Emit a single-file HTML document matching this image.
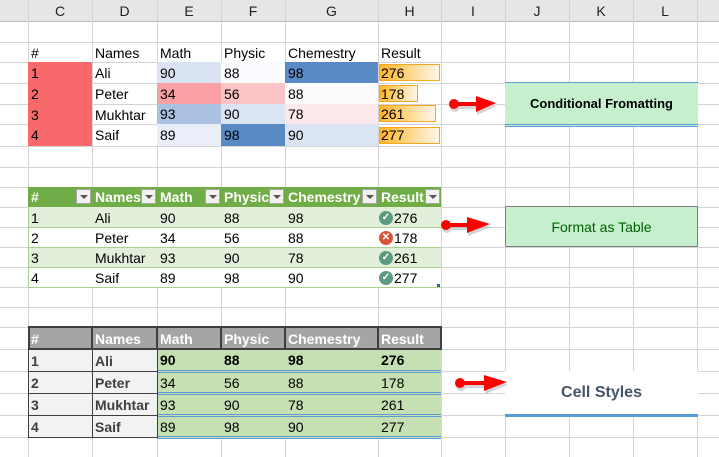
<!DOCTYPE html>
<html><head><meta charset="utf-8"><style>
body{margin:0;width:719px;height:457px;overflow:hidden;background:#fff;font-family:"Liberation Sans",sans-serif;font-size:14px;color:#000;position:relative}
.a{position:absolute;box-sizing:border-box}
.v{position:absolute;top:0;width:1px;height:457px;background:#d4d4d4}
.h{position:absolute;left:0;height:1px;width:719px;background:#d4d4d4}
.c{position:absolute;box-sizing:border-box;padding-left:3px;display:flex;align-items:center;white-space:nowrap}
.hd{position:absolute;top:0;height:22px;display:flex;align-items:center;justify-content:center;font-size:14px;color:#222}
.fb{position:absolute;width:15px;height:15px;background:#f2f2f2;border:1px solid #a6a6a6;box-sizing:border-box}
.fb:after{content:"";position:absolute;left:3px;top:5px;border-left:4px solid transparent;border-right:4px solid transparent;border-top:4px solid #555}
.ic{display:inline-block;width:14px;height:14px;border-radius:50%;color:#fff;font-size:10px;line-height:14px;text-align:center;margin-right:1px;font-weight:bold}
</style></head><body>
<div class="a" style="left:0;top:0;width:719px;height:22px;background:#e6e6e6;border-bottom:1px solid #bdbdbd"></div>
<div class="hd" style="left:28px;width:64px">C</div><div class="hd" style="left:92px;width:65px">D</div><div class="hd" style="left:157px;width:64px">E</div><div class="hd" style="left:221px;width:64px">F</div><div class="hd" style="left:285px;width:93px">G</div><div class="hd" style="left:378px;width:63px">H</div><div class="hd" style="left:441px;width:64px">I</div><div class="hd" style="left:505px;width:64px">J</div><div class="hd" style="left:569px;width:64px">K</div><div class="hd" style="left:633px;width:64px">L</div>
<div class="v" style="left:28px"></div><div class="v" style="left:92px"></div><div class="v" style="left:157px"></div><div class="v" style="left:221px"></div><div class="v" style="left:285px"></div><div class="v" style="left:378px"></div><div class="v" style="left:441px"></div><div class="v" style="left:505px"></div><div class="v" style="left:569px"></div><div class="v" style="left:633px"></div><div class="v" style="left:697px"></div>
<div class="h" style="top:42px"></div><div class="h" style="top:62px"></div><div class="h" style="top:83px"></div><div class="h" style="top:104px"></div><div class="h" style="top:124px"></div><div class="h" style="top:146px"></div><div class="h" style="top:167px"></div><div class="h" style="top:187px"></div><div class="h" style="top:207px"></div><div class="h" style="top:227px"></div><div class="h" style="top:247px"></div><div class="h" style="top:267px"></div><div class="h" style="top:287px"></div><div class="h" style="top:307px"></div><div class="h" style="top:327px"></div><div class="h" style="top:349px"></div><div class="h" style="top:371px"></div><div class="h" style="top:393px"></div><div class="h" style="top:415px"></div><div class="h" style="top:437px"></div>

<!-- Table 1 -->
<div class="c" style="left:28px;top:43px;height:20px">#</div><div class="c" style="left:92px;top:43px;height:20px">Names</div><div class="c" style="left:157px;top:43px;height:20px">Math</div><div class="c" style="left:221px;top:43px;height:20px">Physic</div><div class="c" style="left:285px;top:43px;height:20px">Chemestry</div><div class="c" style="left:378px;top:43px;height:20px">Result</div>
<div class="a" style="left:28px;top:62px;width:64px;height:84px;background:#f8696b"></div>
<div class="c" style="left:28px;top:62px;height:21px">1</div><div class="c" style="left:28px;top:83px;height:21px">2</div><div class="c" style="left:28px;top:104px;height:21px">3</div><div class="c" style="left:28px;top:124px;height:22px">4</div>
<div class="c" style="left:92px;top:62px;height:21px">Ali</div><div class="c" style="left:92px;top:83px;height:21px">Peter</div><div class="c" style="left:92px;top:104px;height:21px">Mukhtar</div><div class="c" style="left:92px;top:124px;height:22px">Saif</div>
<div class="c" style="left:157px;top:62px;width:64px;height:21px;background:#dae3f3">90</div><div class="c" style="left:157px;top:83px;width:64px;height:21px;background:#f9a0a2">34</div><div class="c" style="left:157px;top:104px;width:64px;height:20px;background:#aac1e2">93</div><div class="c" style="left:157px;top:124px;width:64px;height:22px;background:#e9eef8">89</div>
<div class="c" style="left:221px;top:62px;width:64px;height:21px;background:#fbfcff">88</div><div class="c" style="left:221px;top:83px;width:64px;height:21px;background:#fbc4c6">56</div><div class="c" style="left:221px;top:104px;width:64px;height:20px;background:#dbe4f3">90</div><div class="c" style="left:221px;top:124px;width:64px;height:22px;background:#5a8ac6">98</div>
<div class="c" style="left:285px;top:62px;width:93px;height:21px;background:#5a8ac6">98</div><div class="c" style="left:285px;top:83px;width:93px;height:21px;background:#fcfcff">88</div><div class="c" style="left:285px;top:104px;width:93px;height:20px;background:#fce9eb">78</div><div class="c" style="left:285px;top:124px;width:93px;height:22px;background:#dbe4f3">90</div>
<div class="a" style="left:379px;top:64px;width:61px;height:17px;border:1px solid #f5a623;background:linear-gradient(90deg,#ffb628,#fff3e0 95%)"></div>
<div class="a" style="left:379px;top:85px;width:39px;height:17px;border:1px solid #f5a623;background:linear-gradient(90deg,#ffb628,#fff3e0 95%)"></div>
<div class="a" style="left:379px;top:105px;width:57px;height:17px;border:1px solid #f5a623;background:linear-gradient(90deg,#ffb628,#fff3e0 95%)"></div>
<div class="a" style="left:379px;top:127px;width:61px;height:17px;border:1px solid #f5a623;background:linear-gradient(90deg,#ffb628,#fff3e0 95%)"></div>
<div class="c" style="left:378px;top:62px;height:21px">276</div><div class="c" style="left:378px;top:83px;height:21px">178</div><div class="c" style="left:378px;top:104px;height:20px">261</div><div class="c" style="left:378px;top:124px;height:22px">277</div>

<!-- Table 2 -->
<div class="a" style="left:28px;top:187px;width:413px;height:20px;background:#70ad47"></div>
<div class="a" style="left:28px;top:207px;width:413px;height:21px;background:#e2efda;border-bottom:1px solid #a9d08e;border-left:1px solid #a9d08e"></div>
<div class="a" style="left:28px;top:228px;width:413px;height:20px;background:#fff;border-bottom:1px solid #a9d08e;border-left:1px solid #a9d08e"></div>
<div class="a" style="left:28px;top:248px;width:413px;height:20px;background:#e2efda;border-bottom:1px solid #a9d08e;border-left:1px solid #a9d08e"></div>
<div class="a" style="left:28px;top:268px;width:413px;height:20px;background:#fff;border-bottom:1px solid #a9d08e;border-left:1px solid #a9d08e"></div>
<div style="color:#fff;font-weight:bold">
<div class="c" style="left:28px;top:187px;height:20px">#</div><div class="c" style="left:92px;top:187px;height:20px">Names</div><div class="c" style="left:157px;top:187px;height:20px">Math</div><div class="c" style="left:221px;top:187px;height:20px">Physic</div><div class="c" style="left:285px;top:187px;height:20px">Chemestry</div><div class="c" style="left:378px;top:187px;height:20px">Result</div></div>
<div class="fb" style="left:76px;top:189px"></div><div class="fb" style="left:141px;top:189px"></div><div class="fb" style="left:205px;top:189px"></div><div class="fb" style="left:269px;top:189px"></div><div class="fb" style="left:362px;top:189px"></div><div class="fb" style="left:425px;top:189px"></div>
<div class="c" style="left:28px;top:207px;height:21px">1</div><div class="c" style="left:92px;top:207px;height:21px">Ali</div><div class="c" style="left:157px;top:207px;height:21px">90</div><div class="c" style="left:221px;top:207px;height:21px">88</div><div class="c" style="left:285px;top:207px;height:21px">98</div><div class="c" style="left:378px;top:207px;height:21px;padding-left:1px"><span class="ic" style="background:#5e9a80">✓</span>276</div>
<div class="c" style="left:28px;top:228px;height:20px">2</div><div class="c" style="left:92px;top:228px;height:20px">Peter</div><div class="c" style="left:157px;top:228px;height:20px">34</div><div class="c" style="left:221px;top:228px;height:20px">56</div><div class="c" style="left:285px;top:228px;height:20px">88</div><div class="c" style="left:378px;top:228px;height:20px;padding-left:1px"><span class="ic" style="background:#d8553a">✕</span>178</div>
<div class="c" style="left:28px;top:248px;height:20px">3</div><div class="c" style="left:92px;top:248px;height:20px">Mukhtar</div><div class="c" style="left:157px;top:248px;height:20px">93</div><div class="c" style="left:221px;top:248px;height:20px">90</div><div class="c" style="left:285px;top:248px;height:20px">78</div><div class="c" style="left:378px;top:248px;height:20px;padding-left:1px"><span class="ic" style="background:#5e9a80">✓</span>261</div>
<div class="c" style="left:28px;top:268px;height:20px">4</div><div class="c" style="left:92px;top:268px;height:20px">Saif</div><div class="c" style="left:157px;top:268px;height:20px">89</div><div class="c" style="left:221px;top:268px;height:20px">98</div><div class="c" style="left:285px;top:268px;height:20px">90</div><div class="c" style="left:378px;top:268px;height:20px;padding-left:1px"><span class="ic" style="background:#5e9a80">✓</span>277</div>
<div class="a" style="left:437px;top:284px;width:3px;height:3px;background:#3b5ea8"></div>

<!-- Table 3 -->
<div class="a" style="left:28px;top:326px;width:414px;height:24px;background:#3f3f3f"></div>
<div class="a" style="left:30px;top:328px;width:61px;height:20px;background:#a5a5a5"></div><div class="a" style="left:93px;top:328px;width:63px;height:20px;background:#a5a5a5"></div><div class="a" style="left:158px;top:328px;width:62px;height:20px;background:#a5a5a5"></div><div class="a" style="left:222px;top:328px;width:62px;height:20px;background:#a5a5a5"></div><div class="a" style="left:286px;top:328px;width:91px;height:20px;background:#a5a5a5"></div><div class="a" style="left:379px;top:328px;width:61px;height:20px;background:#a5a5a5"></div>
<div style="color:#fff;font-weight:bold">
<div class="c" style="left:28px;top:328px;height:22px">#</div><div class="c" style="left:92px;top:328px;height:22px">Names</div><div class="c" style="left:157px;top:328px;height:22px">Math</div><div class="c" style="left:221px;top:328px;height:22px">Physic</div><div class="c" style="left:285px;top:328px;height:22px">Chemestry</div><div class="c" style="left:378px;top:328px;height:22px">Result</div></div>
<div class="a" style="left:157px;top:350px;width:284px;height:88px;background:#c6e0b4"></div>
<div class="a" style="left:157px;top:370px;width:284px;height:3px;border-top:1px solid #5b9bd5;border-bottom:1px solid #5b9bd5"></div>
<div class="a" style="left:157px;top:392px;width:284px;height:3px;border-top:1px solid #5b9bd5;border-bottom:1px solid #5b9bd5"></div>
<div class="a" style="left:157px;top:414px;width:284px;height:3px;border-top:1px solid #5b9bd5;border-bottom:1px solid #5b9bd5"></div>
<div class="a" style="left:157px;top:436px;width:284px;height:3px;border-top:1px solid #5b9bd5;border-bottom:1px solid #5b9bd5"></div>
<div class="a" style="left:28px;top:349px;width:65px;height:23px;background:#f2f2f2;border:1px solid #3f3f3f"></div><div class="a" style="left:92px;top:349px;width:66px;height:23px;background:#f2f2f2;border:1px solid #3f3f3f"></div>
<div class="a" style="left:28px;top:371px;width:65px;height:23px;background:#f2f2f2;border:1px solid #3f3f3f"></div><div class="a" style="left:92px;top:371px;width:66px;height:23px;background:#f2f2f2;border:1px solid #3f3f3f"></div>
<div class="a" style="left:28px;top:393px;width:65px;height:23px;background:#f2f2f2;border:1px solid #3f3f3f"></div><div class="a" style="left:92px;top:393px;width:66px;height:23px;background:#f2f2f2;border:1px solid #3f3f3f"></div>
<div class="a" style="left:28px;top:415px;width:65px;height:23px;background:#f2f2f2;border:1px solid #3f3f3f"></div><div class="a" style="left:92px;top:415px;width:66px;height:23px;background:#f2f2f2;border:1px solid #3f3f3f"></div>
<div style="font-weight:bold;color:#3f3f3f">
<div class="c" style="left:28px;top:350px;height:21px">1</div><div class="c" style="left:92px;top:350px;height:21px">Ali</div>
<div class="c" style="left:28px;top:372px;height:21px">2</div><div class="c" style="left:92px;top:372px;height:21px">Peter</div>
<div class="c" style="left:28px;top:394px;height:21px">3</div><div class="c" style="left:92px;top:394px;height:21px">Mukhtar</div>
<div class="c" style="left:28px;top:416px;height:21px">4</div><div class="c" style="left:92px;top:416px;height:21px">Saif</div></div>
<div style="font-weight:bold"><div class="c" style="left:157px;top:350px;height:20px">90</div><div class="c" style="left:221px;top:350px;height:20px">88</div><div class="c" style="left:285px;top:350px;height:20px">98</div><div class="c" style="left:378px;top:350px;height:20px">276</div></div>
<div class="c" style="left:157px;top:373px;height:19px">34</div><div class="c" style="left:221px;top:373px;height:19px">56</div><div class="c" style="left:285px;top:373px;height:19px">88</div><div class="c" style="left:378px;top:373px;height:19px">178</div>
<div class="c" style="left:157px;top:395px;height:19px">93</div><div class="c" style="left:221px;top:395px;height:19px">90</div><div class="c" style="left:285px;top:395px;height:19px">78</div><div class="c" style="left:378px;top:395px;height:19px">261</div>
<div class="c" style="left:157px;top:417px;height:19px">89</div><div class="c" style="left:221px;top:417px;height:19px">98</div><div class="c" style="left:285px;top:417px;height:19px">90</div><div class="c" style="left:378px;top:417px;height:19px">277</div>

<!-- Right boxes -->
<div class="a" style="left:505px;top:82px;width:193px;height:45px;background:#c6efce;border-top:1px solid #5b9bd5;border-bottom:3px double #5b9bd5;display:flex;align-items:center;justify-content:center;font-weight:bold;font-size:13px">Conditional Fromatting</div>
<div class="a" style="left:505px;top:206px;width:193px;height:41px;background:#c6efce;border:1px solid #7f7f7f;display:flex;align-items:center;justify-content:center;color:#006100;font-size:14px">Format as Table</div>
<div class="a" style="left:505px;top:371px;width:193px;height:46px;background:#fff;border-bottom:3px solid #5b9bd5;display:flex;align-items:center;justify-content:center;color:#44546a;font-weight:bold;font-size:16px">Cell Styles</div>

<svg class="a" style="left:0;top:0" width="719" height="457">
<g fill="#aaa" opacity="0.5" transform="translate(1,3)">
<circle cx="454" cy="104" r="5"/><rect x="454" y="102" width="24" height="4"/><path d="M476 96 L496 103 L476 112 Z"/>
<circle cx="446" cy="225" r="5"/><rect x="446" y="223" width="22" height="4"/><path d="M467 217 L490 224 L467 233 Z"/>
<circle cx="460" cy="383" r="5"/><rect x="460" y="381" width="24" height="4"/><path d="M484 375 L507 382 L484 391 Z"/>
</g>
<g fill="#f00" stroke="none">
<circle cx="454" cy="104" r="5"/><rect x="454" y="102" width="24" height="4"/><path d="M476 96 L496 103 L476 112 Z"/>
<circle cx="446" cy="225" r="5"/><rect x="446" y="223" width="22" height="4"/><path d="M467 217 L490 224 L467 233 Z"/>
<circle cx="460" cy="383" r="5"/><rect x="460" y="381" width="24" height="4"/><path d="M484 375 L507 382 L484 391 Z"/>
</g></svg>
</body></html>
